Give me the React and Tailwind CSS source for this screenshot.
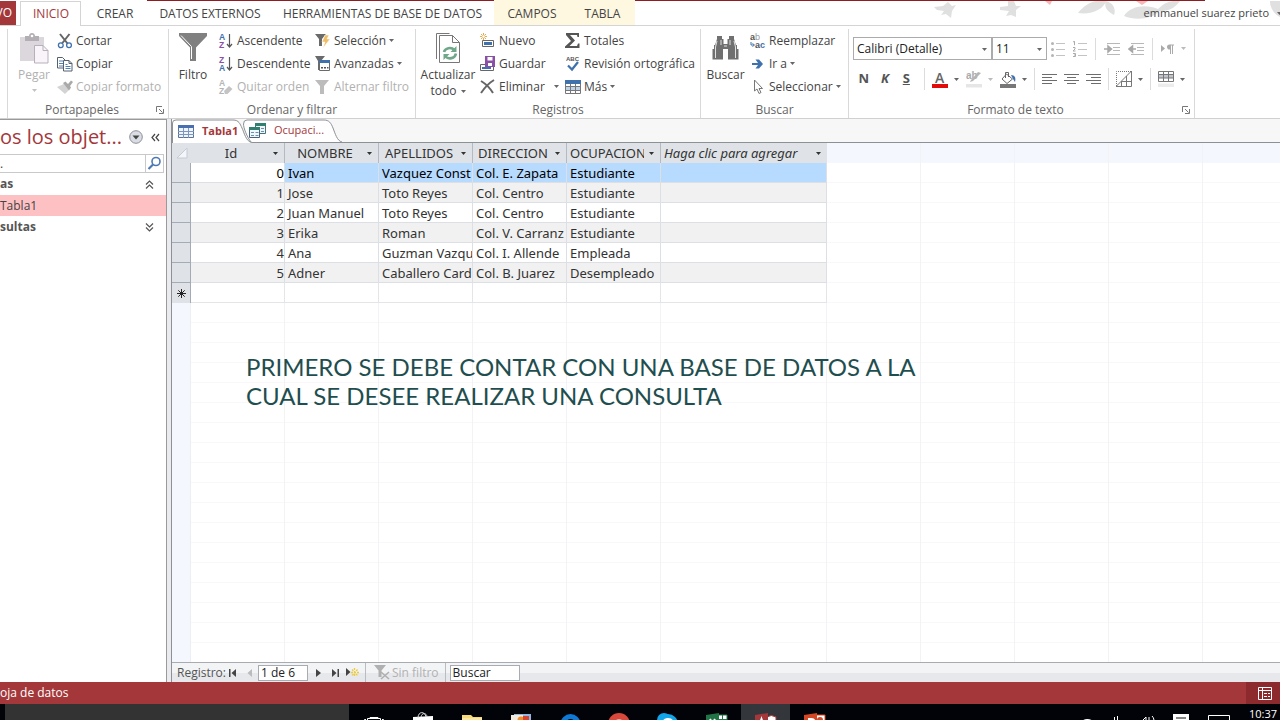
import React, { useState } from "react";
import clsx from "clsx";

const columns = [
  { name: "Id", width: 94 },
  { name: "NOMBRE", width: 94 },
  { name: "APELLIDOS", width: 94 },
  { name: "DIRECCION", width: 94 },
  { name: "OCUPACION", width: 94 },
  { name: "Haga clic para agregar", width: 166 },
];

const rows = [
  [0, "Ivan", "Vazquez Const", "Col. E. Zapata", "Estudiante"],
  [1, "Jose", "Toto Reyes", "Col. Centro", "Estudiante"],
  [2, "Juan Manuel", "Toto Reyes", "Col. Centro", "Estudiante"],
  [3, "Erika", "Roman", "Col. V. Carranz", "Estudiante"],
  [4, "Ana", "Guzman Vazqu", "Col. I. Allende", "Empleada"],
  [5, "Adner", "Caballero Card", "Col. B. Juarez", "Desempleado"],
];

/* ---------- icons ---------- */

const Svg = ({ w = 16, h = 16, className, children }) => (
  <svg width={w} height={h} viewBox={`0 0 ${w} ${h}`} fill="none" className={clsx("shrink-0", className)} aria-hidden="true">
    {children}
  </svg>
);

const Arrow = ({ color = "#666", className }) => (
  <Svg w={5} h={3} className={className}>
    <path d="M0 0h5L2.5 3z" fill={color} />
  </Svg>
);

const PasteIcon = () => (
  <Svg w={29} h={31}>
    <path d="M0 4h24v24H0z" fill="#dcd7dc" />
    <path d="M5 3h4c0-4 6-4 6 0h4v5H5z" fill="#b3aeb3" />
    <circle cx="12" cy="3" r="1.3" fill="#fff" />
    <path d="M14.500 12.500h8.500l5 5v12.500h-13.500z" fill="#f8f4fa" stroke="#b7b0ba" />
    <path d="M23 12.500v5h5" stroke="#b7b0ba" />
  </Svg>
);

const CutIcon = () => (
  <Svg>
    <path d="M3 1l7.500 9.500M12.500 1L5 10.500" stroke="#666" strokeWidth="2" />
    <circle cx="3.800" cy="12.300" r="2.400" stroke="#3f72ad" strokeWidth="1.300" />
    <circle cx="12" cy="12.300" r="2.400" stroke="#3f72ad" strokeWidth="1.300" />
  </Svg>
);

const CopyIcon = () => (
  <Svg>
    <path d="M.5 1.500h5l2.500 2.500v8H.5z" fill="#fff" stroke="#55606e" />
    <path d="M2 5h4M2 7.500h4M2 10h4" stroke="#4f7fb8" />
    <path d="M6.500 4.500h5.500l3 3v7.500H6.500z" fill="#fff" stroke="#55606e" />
    <path d="M12 4.500v3h3" stroke="#55606e" />
    <path d="M8.500 8.500h2M8.500 10.500h5M8.500 12.500h5" stroke="#4f7fb8" />
  </Svg>
);

const BrushIcon = () => (
  <Svg>
    <path d="M0 8l7-3 5 6-4 4z" fill="#d3d3d3" />
    <path d="M6 4l2.500-1.500L11 5l3-3.500L16 3l-3 4 1 1.500-2 3z" fill="#a9a9a9" />
  </Svg>
);

const FunnelBig = () => (
  <Svg w={28} h={28}>
    <path d="M0 0h28v3L17 14.500V28h-6V14.500L0 3z" fill="#808080" />
    <path d="M2 2.500l10.500 11V26" stroke="#fff" />
  </Svg>
);

const SortIcon = ({ top, bottom, topColor, bottomColor }) => (
  <Svg>
    <text x="1" y="7" fontSize="8.500" fontFamily="Liberation Sans" fontWeight="bold" fill={topColor}>{top}</text>
    <text x="1" y="15" fontSize="8.500" fontFamily="Liberation Sans" fontWeight="bold" fill={bottomColor}>{bottom}</text>
    <path d="M11.500 1v13M9 11l2.500 3 2.500-3" stroke="#555" strokeWidth="1.200" />
  </Svg>
);

const ClearSortIcon = () => (
  <Svg>
    <text x="1" y="7" fontSize="8.500" fontFamily="Liberation Sans" fontWeight="bold" fill="#b5b5b5">A</text>
    <text x="1" y="15" fontSize="8.500" fontFamily="Liberation Sans" fontWeight="bold" fill="#b5b5b5">Z</text>
    <path d="M6 12l5-5 3.500 3-5 5H7z" fill="#c4c4c4" />
  </Svg>
);

const SelectionIcon = () => (
  <Svg>
    <path d="M0 1h11L7 6v7H4V6z" fill="#6a6a6a" />
    <path d="M10 2h4l-2 4h3l-7 9 2-6H7z" fill="#eebd66" stroke="#fff" strokeWidth=".5" />
  </Svg>
);

const AdvancedIcon = () => (
  <Svg>
    <path d="M0 0h10L6 5v9H3V5z" fill="#6a6a6a" />
    <path d="M4.500 4.500h10v10h-10z" fill="#fff" stroke="#6a6a6a" />
    <path d="M4 4h11v3H4z" fill="#3f72ad" />
    <path d="M6 11h2v1.500H6zM9 11h2v1.500H9zM12 11h1.500v1.500H12z" fill="#555" />
  </Svg>
);

const ToggleFilterIcon = () => (
  <Svg>
    <path d="M0 1h14L9 7v8H5V7z" fill="#bcbcbc" />
  </Svg>
);

const RefreshIcon = () => (
  <Svg w={25} h={31}>
    <path d="M.5 26V.5h13" stroke="#777" />
    <path d="M3.500 2.500h13l7 7v20h-20z" fill="#fff" stroke="#777" />
    <path d="M16.500 2.500v7h7" stroke="#777" />
    <path d="M8 19c1-4 7-5.500 10.500-2M20 20.500c-1 5-7.500 6.500-11 2.500" stroke="#6fa889" strokeWidth="2.600" />
    <path d="M20.500 13v6h-6zM7.500 27v-6h6z" fill="#6fa889" />
  </Svg>
);

const NewRecordIcon = () => (
  <Svg>
    <path d="M3.500 0v7M0 3.500h7M1 1l5 5M6 1L1 6" stroke="#e5ab50" />
    <circle cx="3.500" cy="3.500" r="1.300" fill="#fff" />
    <path d="M2.500 7.500h11v6h-11z" fill="#fff" stroke="#666" />
    <path d="M4 9h8v3H4z" fill="#3f72ad" />
  </Svg>
);

const SaveIcon = () => (
  <Svg>
    <path d="M.5 8.500h13v6H.5z" fill="#fff" stroke="#666" />
    <path d="M2 11h9v2H2z" fill="#3f72ad" />
    <path d="M5 0h10v11H5z" fill="#8a50a5" />
    <path d="M7.500 1h5v3.500h-5zM8 7h4v3H8z" fill="#fff" />
  </Svg>
);

const DeleteIcon = () => (
  <Svg>
    <path d="M1 2c5 3 9 7 12 12M14 1C9 4 5 8 1 14" stroke="#666" strokeWidth="2" />
  </Svg>
);

const SigmaIcon = () => (
  <Svg>
    <path d="M1 0h13v4h-1.500L12 2H5l5 5.500L4.500 13H12l1-2.500h1.500V15H0v-1.500L6 8 1 2z" fill="#555" />
  </Svg>
);

const SpellIcon = () => (
  <Svg>
    <text x="1" y="5" fontSize="6" fontFamily="Liberation Sans" fontWeight="bold" fill="#555">ABC</text>
    <path d="M3 9.500l4 4L13 6" stroke="#3f72ad" strokeWidth="2.200" />
  </Svg>
);

const MoreIcon = () => (
  <Svg>
    <path d="M.5 1.500h15v13H.5z" fill="#fff" stroke="#777" />
    <path d="M0 1h16v4H0z" fill="#3f72ad" />
    <path d="M1 8h14v3H1z" fill="#bed3ea" />
    <path d="M0 7.500h16M0 11.500h16M5.500 5v10M10.500 5v10" stroke="#777" />
  </Svg>
);

const BinocularsIcon = () => (
  <Svg w={27} h={27}>
    <path d="M5 3h5v3h1.500v5h4V6H17V3h5v3l2 6h1v4h1.500v10.500H16V16h-5v10.500H.500V16H2v-4h1l2-6z" fill="#707070" />
    <path d="M5 8l-1.500 6v11M9 7v5M22 8l1.500 6v11M18 7v5M12 13h3" stroke="#fff" strokeWidth=".8" />
  </Svg>
);

const ReplaceIcon = () => (
  <Svg className="overflow-visible">
    <text x="0" y="7" fontSize="9" fontFamily="Liberation Sans" fontWeight="bold" fill="#555">a<tspan fontWeight="normal" fill="#999">b</tspan></text>
    <text x="5" y="15" fontSize="9" fontFamily="Liberation Sans" fontWeight="bold" fill="#555">a<tspan fill="#3f72ad">c</tspan></text>
    <path d="M1 9v3h2.500M2.500 10.500l2 1.500-2 1.500" stroke="#3f72ad" />
  </Svg>
);

const GotoIcon = () => (
  <Svg>
    <path d="M2 7h6L5.500 3.500H9L13 8l-4 4.500H5.500L8 9H2z" fill="#3f72ad" />
  </Svg>
);

const PointerIcon = () => (
  <Svg>
    <path d="M4.500 1v11l2.500-2 2 4.500 2-1-2-4h3.500z" fill="#fff" stroke="#777" />
  </Svg>
);

const BulletsIcon = () => (
  <Svg w={14} h={16}>
    <path d="M5 2.500h9M5 8.500h9M5 14.500h9" stroke="#c3c3c3" />
    <circle cx="1.500" cy="2.500" r="1.500" fill="#b5b5b5" />
    <circle cx="1.500" cy="8.500" r="1.500" fill="#b5b5b5" />
    <circle cx="1.500" cy="14.500" r="1.500" fill="#b5b5b5" />
  </Svg>
);

const NumbersIcon = () => (
  <Svg w={14} h={16}>
    <path d="M5 2.500h9M5 8.500h9M5 14.500h9" stroke="#c3c3c3" />
    <path d="M0 1l1.500-.8v4M0 6.500h2v1.500L0 10h2.500M0 12.500h2.500v3H0M1 14h1.500" stroke="#aaa" />
  </Svg>
);

const IndentIcon = ({ out }) => (
  <Svg w={16} h={12}>
    <path d="M3 .5h13M9 4.500h7M9 7.500h7M3 11.500h13" stroke="#b8b8b8" />
    {out ? (
      <path d="M2 6h6M4.500 3L1 6l3.500 3z" stroke="#a8a8a8" strokeWidth="1.500" fill="#a8a8a8" />
    ) : (
      <path d="M0 6h5M4 3l3.500 3L4 9z" stroke="#a8a8a8" strokeWidth="1.500" fill="#a8a8a8" />
    )}
  </Svg>
);

const DirectionIcon = () => (
  <Svg w={14} h={10}>
    <path d="M0 1l4 3.500L0 8z" fill="#aaa" />
    <path d="M6 3a2.500 2.500 0 012.500-2.500H13V1.500h-1V10h-1V1.500h-1V10H9V5.500A2.500 2.500 0 016 3z" fill="#aaa" />
  </Svg>
);

const FontColorIcon = () => (
  <Svg w={16} h={17}>
    <text x="3" y="12" fontSize="14" fontFamily="Open Sans" fontWeight="600" fill="#666">A</text>
    <path d="M0 13h16v4H0z" fill="#e00b0b" />
  </Svg>
);

const HighlightIcon = () => (
  <Svg w={16} h={17}>
    <text x="0" y="8" fontSize="10" fontFamily="Liberation Sans" fontWeight="bold" fill="#aaa">ab</text>
    <path d="M15 2l-8 8-3 1 1-2 7-8z" fill="#b5b5b5" />
    <path d="M0 13h16v3.500H0z" fill="#e6e6e6" />
  </Svg>
);

const FillIcon = () => (
  <Svg w={16} h={17}>
    <path d="M6.500 3l6 5-5.500 4.500-5-4.500z" fill="#fff" stroke="#666" />
    <path d="M5.500 7V1.500h3V6" stroke="#666" />
    <path d="M11 4c4 0 5 3 4 7l-2-3z" fill="#3f72ad" />
    <path d="M0 13h16v4H0z" fill="#777" />
  </Svg>
);

const AlignIcon = ({ d }) => (
  <Svg w={15} h={12}>
    <path d={d} stroke="#6d6d6d" />
  </Svg>
);

const GridlinesIcon = () => (
  <Svg w={16} h={16}>
    <path d="M.5 15V.5H15" stroke="#777" strokeDasharray="1 1" />
    <path d="M0 15.500L15.500 0v15.500zM10.500 5v10M5.500 10.500h10M5.500 10v5" stroke="#777" />
  </Svg>
);

const AltRowIcon = () => (
  <Svg w={16} h={16}>
    <path d="M.5.5h15v10H.5z" fill="#fff" stroke="#777" />
    <path d="M1 4h14v3H1z" fill="#bfc6ce" />
    <path d="M0 3.500h16M0 7h16M5.500 0v10M10.500 0v10" stroke="#777" />
    <path d="M0 12.500h16V16H0z" fill="#ececec" />
  </Svg>
);

const Launcher = () => (
  <Svg w={8} h={8}>
    <path d="M.5 6V.5H6M3 3l3.500 3.500M7.500 3v4.500H3" stroke="#777" />
  </Svg>
);

const Chevrons = ({ down }) => (
  <Svg w={9} h={9} className={down ? "rotate-180" : undefined}>
    <path d="M1 4.500l3.500-3.500 3.500 3.500M1 8.500L4.500 5 8 8.500" stroke="#555" strokeWidth="1.200" />
  </Svg>
);

const TableIcon = () => (
  <Svg w={16} h={13}>
    <path d="M.5.5h15v12H.5z" fill="#eef4fb" stroke="#5b7196" />
    <path d="M0 0h16v3H0z" fill="#4a6fae" />
    <path d="M0 6.500h16M0 9.500h16M5.500 3v10M10.500 3v10" stroke="#7e96bd" />
  </Svg>
);

const QueryIcon = () => (
  <Svg w={17} h={16}>
    <path d="M6.500.5h10v10h-10z" fill="#eef6f4" stroke="#47707c" />
    <path d="M6 0h11v3H6z" fill="#2f8071" />
    <path d="M.5 4.500h10v10H.5z" fill="#f2f7fb" stroke="#47607c" />
    <path d="M0 4h11v3H0z" fill="#2f8071" />
    <path d="M2 9.500h3M6.500 9.500h3M2 12.500h3M6.500 12.500h3M12 5.500h3M12 8.500h3" stroke="#6a8fb5" />
  </Svg>
);

const Birds = () => (
  <svg width="360" height="20" viewBox="0 0 360 20" className="absolute right-0 top-px" aria-hidden="true">
    <g fill="#e0e0e0">
      <path d="M14 6l9-1 5-4 4 4 4-1-4 6-1 7-5-4-5 1 3-4-7-1z" />
      <path d="M80 6l8-1V0h6l2 5 5 0-5 4v7l-5-2-5 1 3-5-9-1z" />
      <path d="M158 12c8-10 18-14 28-12-2 8-14 14-28 12zM186 0c8 2 10 9 8 14-8-4-10-9-8-14z" />
      <path d="M204 15c6-10 22-12 34-7 6-6 12-9 22-8-6 8-12 10-20 10-8 8-24 10-36 5z" />
      <path d="M350 0h10v16c-6-3-10-9-10-16z" />
    </g>
    <path d="M125 0h7l-2 4zM216 0h12l-6 4z" fill="#f4b9bb" />
  </svg>
);

/* ---------- ribbon pieces ---------- */

function SmallButton({ icon, label, arrow, disabled, arrowGap }) {
  return (
    <button
      disabled={disabled}
      className={clsx("flex h-[23px] items-center gap-[3px] whitespace-nowrap text-xs", disabled ? "text-[#b1b1b1]" : "text-[#444]")}
    >
      {icon}
      {label}
      {arrow && <Arrow className={arrowGap ? "ml-1.5" : undefined} />}
    </button>
  );
}

function BigButton({ icon, lines, arrow, disabled, className }) {
  return (
    <button
      disabled={disabled}
      className={clsx("flex shrink-0 flex-col items-center pt-1 text-xs leading-4", disabled ? "text-[#b1b1b1]" : "text-[#444]", className)}
    >
      <span className="flex h-[34px] items-start">{icon}</span>
      {lines.map((line, i) => (
        <span key={line} className="flex items-center gap-1 whitespace-nowrap">
          {line}
          {arrow && i > 0 && <Arrow />}
        </span>
      ))}
      {arrow && lines.length === 1 && <Arrow color="#c2c2c2" className="mt-1.5" />}
    </button>
  );
}

function Group({ label, launcher, className, children }) {
  return (
    <section className={clsx("flex shrink-0 flex-col border-r border-[#d9d9d9]", className)}>
      <div className="flex h-[73px]">{children}</div>
      <div className="flex h-4 items-center text-xs text-[#666]">
        <span className="flex-1 text-center">{label}</span>
        {launcher && (
          <button aria-label={`${label}: opciones`} className="mr-1">
            <Launcher />
          </button>
        )}
      </div>
    </section>
  );
}

const Divider = () => <span className="h-[22px] w-px shrink-0 bg-[#dcdcdc]" />;

function IconButton({ name, arrow, arrowColor, children }) {
  return (
    <button aria-label={name} className="flex shrink-0 items-center gap-1.5">
      {children}
      {arrow && <Arrow color={arrowColor} />}
    </button>
  );
}

function Combo({ label, value, className }) {
  return (
    <label className={clsx("relative block h-[23px] border border-[#ababab] bg-white", className)}>
      <select aria-label={label} className="block h-full w-full appearance-none bg-transparent pl-[3px] text-xs text-[#222] outline-none">
        <option>{value}</option>
      </select>
      <Arrow className="pointer-events-none absolute right-1 top-2.5" />
    </label>
  );
}

function Ribbon() {
  return (
    <div className="flex shrink-0 overflow-hidden border-b border-[#d0d0d0] pt-[3px]">
      <div className="w-2 shrink-0 border-r border-[#d9d9d9]" />
      <Group label="Portapapeles" launcher className="w-[161px]">
        <BigButton className="w-12 pl-1" icon={<PasteIcon />} lines={["Pegar"]} arrow disabled />
        <div className="ml-px">
          <SmallButton icon={<CutIcon />} label="Cortar" />
          <SmallButton icon={<CopyIcon />} label="Copiar" />
          <SmallButton icon={<BrushIcon />} label="Copiar formato" disabled />
        </div>
      </Group>
      <Group label="Ordenar y filtrar" className="w-[247px]">
        <BigButton className="w-12" icon={<FunnelBig />} lines={["Filtro"]} />
        <div className="ml-px w-[97px]">
          <SmallButton icon={<SortIcon top="A" bottom="Z" topColor="#3f72ad" bottomColor="#8a50a5" />} label="Ascendente" />
          <SmallButton icon={<SortIcon top="Z" bottom="A" topColor="#8a50a5" bottomColor="#3f72ad" />} label="Descendente" />
          <SmallButton icon={<ClearSortIcon />} label="Quitar orden" disabled />
        </div>
        <div>
          <SmallButton icon={<SelectionIcon />} label="Selección" arrow />
          <SmallButton icon={<AdvancedIcon />} label="Avanzadas" arrow />
          <SmallButton icon={<ToggleFilterIcon />} label="Alternar filtro" disabled />
        </div>
      </Group>
      <Group label="Registros" className="w-[285px]">
        <BigButton className="w-16" icon={<RefreshIcon />} lines={["Actualizar", "todo"]} arrow />
        <div className="w-[85px]">
          <SmallButton icon={<NewRecordIcon />} label="Nuevo" />
          <SmallButton icon={<SaveIcon />} label="Guardar" />
          <SmallButton icon={<DeleteIcon />} label="Eliminar" arrow arrowGap />
        </div>
        <div>
          <SmallButton icon={<SigmaIcon />} label="Totales" />
          <SmallButton icon={<SpellIcon />} label="Revisión ortográfica" />
          <SmallButton icon={<MoreIcon />} label="Más" arrow />
        </div>
      </Group>
      <Group label="Buscar" className="w-[148px]">
        <BigButton className="w-[49px]" icon={<BinocularsIcon />} lines={["Buscar"]} />
        <div>
          <SmallButton icon={<ReplaceIcon />} label="Reemplazar" />
          <SmallButton icon={<GotoIcon />} label="Ir a" arrow />
          <SmallButton icon={<PointerIcon />} label="Seleccionar" arrow />
        </div>
      </Group>
      <Group label="Formato de texto" launcher className="w-[346px]">
        <div className="flex flex-col gap-2 pl-1 pt-2">
          <div className="flex items-center gap-2">
            <div className="flex">
              <Combo label="Fuente" value="Calibri (Detalle)" className="w-[139px]" />
              <Combo label="Tamaño de fuente" value="11" className="w-[55px]" />
            </div>
            <div className="-ml-1 flex items-center gap-2">
              <IconButton name="Viñetas"><BulletsIcon /></IconButton>
              <IconButton name="Numeración"><NumbersIcon /></IconButton>
              <Divider />
              <IconButton name="Aumentar sangría"><IndentIcon /></IconButton>
              <IconButton name="Disminuir sangría"><IndentIcon out /></IconButton>
              <Divider />
              <IconButton name="Dirección del texto" arrow arrowColor="#bbb"><DirectionIcon /></IconButton>
            </div>
          </div>
          <div className="flex h-[22px] items-center gap-[7px]">
            <div className="flex w-16 text-[13px] font-bold text-[#555]">
              <button aria-label="Negrita" className="flex-1">N</button>
              <button aria-label="Cursiva" className="flex-1 italic">K</button>
              <button aria-label="Subrayado" className="flex-1 underline">S</button>
            </div>
            <Divider />
            <IconButton name="Color de fuente" arrow><FontColorIcon /></IconButton>
            <IconButton name="Color de resaltado" arrow arrowColor="#bbb"><HighlightIcon /></IconButton>
            <IconButton name="Color de fondo" arrow><FillIcon /></IconButton>
            <Divider />
            <IconButton name="Alinear a la izquierda"><AlignIcon d="M0 1.500h15M0 4.500h10M0 7.500h15M0 10.500h10" /></IconButton>
            <IconButton name="Centrar"><AlignIcon d="M0 1.500h15M3 4.500h9M0 7.500h15M3 10.500h9" /></IconButton>
            <IconButton name="Alinear a la derecha"><AlignIcon d="M0 1.500h15M5 4.500h10M0 7.500h15M5 10.500h10" /></IconButton>
            <Divider />
            <IconButton name="Líneas de división" arrow><GridlinesIcon /></IconButton>
            <Divider />
            <IconButton name="Color de fila alternativo" arrow><AltRowIcon /></IconButton>
          </div>
        </div>
      </Group>
    </div>
  );
}

function RibbonTabs() {
  return (
    <header className="relative flex h-[26px] shrink-0 items-stretch whitespace-nowrap border-b border-[#d4d4d4] text-xs text-[#444]">
      <div className="absolute left-[147px] top-0 h-px w-[1058px] bg-[#8e1c20]" />
      <Birds />
      <button className="relative mt-px flex w-4 justify-end overflow-hidden bg-[#a4373a] pr-1 pt-1 text-white">VO</button>
      <button className="relative -mb-px ml-1 mt-px w-[61px] border border-b-0 border-[#d4d4d4] bg-white px-3 text-left text-[#a4373a]">INICIO</button>
      <button className="w-[68px] pt-0.5">CREAR</button>
      <button className="w-[122px] pt-0.5">DATOS EXTERNOS</button>
      <button className="w-[223px] pt-0.5">HERRAMIENTAS DE BASE DE DATOS</button>
      <button className="relative w-[76px] bg-[#fef8e0] pt-0.5">CAMPOS</button>
      <button className="relative w-[65px] bg-[#fef8e0] pt-0.5">TABLA</button>
      <button className="relative ml-auto flex items-center gap-2 pt-0.5 text-[11px]">
        emmanuel suarez prieto
        <Arrow className="-mr-0.5" />
      </button>
    </header>
  );
}

/* ---------- panels ---------- */

function NavPane() {
  return (
    <aside className="w-[167px] shrink-0 overflow-hidden whitespace-nowrap border-r border-t border-[#9a9a9a] bg-white text-[#555]">
      <div className="flex h-[34px] items-center">
        <h2 className="flex-1 text-xl text-[#a4373a]">os los objet...</h2>
        <button aria-label="Menú de objetos" className="mr-2">
          <Svg w={14} h={14}>
            <circle cx="7" cy="7" r="6.300" fill="#dadde3" stroke="#8c8f96" />
            <path d="M3.500 5.500h7L7 9.500z" fill="#444" />
          </Svg>
        </button>
        <button aria-label="Contraer panel" className="mr-1.5">
          <Svg w={9} h={9}>
            <path d="M4 1L1 4.500 4 8M8 1L5 4.500 8 8" stroke="#444" strokeWidth="1.200" />
          </Svg>
        </button>
      </div>
      <div className="mr-0.5 flex h-[19px] border border-l-0 border-[#c9c9c9]">
        <input aria-label="Buscar objetos" defaultValue="." className="min-w-0 flex-1 text-xs text-[#444] outline-none" />
        <button aria-label="Buscar" className="border-l border-[#c9c9c9] px-px">
          <Svg w={15} h={15}>
            <circle cx="9" cy="5.500" r="4" stroke="#4c79b5" strokeWidth="1.600" />
            <path d="M6 8.500l-4.500 4.500" stroke="#4c79b5" strokeWidth="2.200" />
          </Svg>
        </button>
      </div>
      <button className="flex h-[22px] w-full items-center justify-between pr-3 text-xs font-bold">
        as <Chevrons />
      </button>
      <a href="#tabla1" className="flex h-[21px] items-center bg-[#fec1c3] text-xs text-[#444]">Tabla1</a>
      <button className="flex h-[22px] w-full items-center justify-between pr-3 text-xs font-bold">
        sultas <Chevrons down />
      </button>
    </aside>
  );
}

function DocumentTabs() {
  return (
    <div className="flex h-6 shrink-0 border-b border-[#8d9095] bg-[#f7f7f7] text-[11px] text-[#a4373a]">
      <button className="relative z-10 -mb-px flex w-20 items-center gap-2 pl-1.5 font-bold">
        <Svg w={80} h={24} className="absolute left-0 top-0">
          <path d="M.5 24V4Q.500 1 4 1h57c6 0 7 4 9 8s4 14 10 14.500V24z" fill="#fff" />
          <path d="M.5 24V4Q.500 1 4 1h57c6 0 7 4 9 8s4 14 10 14.500" stroke="#8d9095" />
        </Svg>
        <span className="relative"><TableIcon /></span>
        <span className="relative">Tabla1</span>
      </button>
      <button className="relative -ml-[9px] flex w-[100px] items-center gap-2 pl-1.5">
        <Svg w={100} h={23} className="absolute left-0 top-0">
          <path d="M8 23C4 18 .500 9 .500 5Q.500 1 4 1h77c5 0 7 3 9 8s4 13 9 14" fill="#fff" stroke="#8d9095" />
        </Svg>
        <span className="relative"><QueryIcon /></span>
        <span className="relative">Ocupaci...</span>
      </button>
    </div>
  );
}

// Faint lines that continue the datasheet below and to the right of the records
function EmptyGrid() {
  const line = "shrink-0 border-r border-[#f3f3f5]";
  return (
    <div className="flex overflow-hidden bg-white bg-[repeating-linear-gradient(to_bottom,transparent_0_19px,#f8f8fa_19px_20px)] [grid-area:1/1]">
      <div className="w-[19px] shrink-0 border-r border-[#eceef6] bg-[#f5f7ff]" />
      {columns.map((c) => (
        <div key={c.name} className={line} style={{ width: c.width }} />
      ))}
      {[0, 1, 2, 3].map((n) => (
        <div key={n} className={clsx(line, "w-[94px]")}>
          <div className="h-5 bg-[#f5f7ff]" />
        </div>
      ))}
      <div className="flex-1">
        <div className="h-5 bg-[#f5f7ff]" />
      </div>
    </div>
  );
}

function Datasheet() {
  const [selected, setSelected] = useState(0);

  return (
    <div className="grid min-h-0 flex-1 grid-cols-1 grid-rows-1 overflow-hidden">
      <EmptyGrid />
      <div className="relative overflow-hidden [grid-area:1/1]">
        <table className="w-[655px] table-fixed border-separate border-spacing-0 font-['Noto_Sans',sans-serif] text-[13px] leading-[18px] text-[#333]">
          <colgroup>
            <col className="w-[19px]" />
            {columns.map((c) => (
              <col key={c.name} style={{ width: c.width }} />
            ))}
          </colgroup>
          <thead>
            <tr className="bg-[#dfe3e8]">
              <th className="h-5 p-0">
                <Svg w={19} h={16}>
                  <path d="M15 3v10H5z" fill="#f4f6f9" stroke="#c5ccd6" />
                </Svg>
              </th>
              {columns.map((c, i) => (
                <th key={c.name} className={clsx("h-5 p-0 font-normal", i < 5 && "border-r border-[#b4bac3]")}>
                  <button className={clsx("flex w-full items-center justify-between pr-1.5", i === 5 && "italic")}>
                    <span className={clsx("mr-[5px] flex-1 overflow-hidden whitespace-nowrap pl-[3px]", i > 3 ? "text-left" : "text-center")}>{c.name}</span>
                    <Arrow color="#333" />
                  </button>
                </th>
              ))}
            </tr>
          </thead>
          <tbody>
            {rows.map((row, r) => (
              <tr
                key={row[0]}
                onClick={() => setSelected(r)}
                className={clsx(r === selected ? "text-black" : r % 2 ? "bg-[#f1f1f1]" : "bg-white")}
              >
                <td className="h-5 border-b border-r border-[#a3abb7] bg-[#dfe3e8] p-0" />
                {[...row, ""].map((cell, c) => (
                  <td
                    key={c}
                    className={clsx(
                      "h-5 overflow-hidden whitespace-nowrap border-b border-r border-[#dcdfe3] p-0 pt-px",
                      c === 0 ? "text-right" : "pl-[3px]",
                      r === selected && (c === 0 ? "bg-white" : "bg-[#b7daff]")
                    )}
                  >
                    {cell}
                  </td>
                ))}
              </tr>
            ))}
            <tr className="bg-white">
              <td className="h-5 border-r border-[#a3abb7] bg-[#dfe3e8] p-0">
                <Svg w={18} h={19}>
                  <path d="M9.500 5v9M5 9.500h9M6.300 6.300l6.400 6.400M12.700 6.300l-6.400 6.400" stroke="#222" />
                </Svg>
              </td>
              {columns.map((c) => (
                <td key={c.name} className="h-5 border-b border-r border-[#e3e5e8] p-0" />
              ))}
            </tr>
          </tbody>
        </table>
        <p className="ml-[74px] mt-[49px] max-w-[700px] font-['Lato'] text-2xl leading-[29px] text-[#1f4e4f]">
          PRIMERO SE DEBE CONTAR CON UNA BASE DE DATOS A LA CUAL SE DESEE REALIZAR UNA CONSULTA
        </p>
      </div>
    </div>
  );
}

function RecordBar() {
  return (
    <div className="flex h-5 shrink-0 items-center whitespace-nowrap border-t border-[#a8abb0] bg-linear-to-b from-[#f3f4f6] from-50% to-[#e6e8eb] to-50% pl-[5px] text-xs text-[#555]">
      <label htmlFor="record" className="w-[52px]">Registro:</label>
      <button aria-label="Primer registro" className="mr-2.5">
        <Svg w={8} h={8}><path d="M0 0h1.500v8H0zM7 0v8L2.500 4z" fill="#444" /></Svg>
      </button>
      <button aria-label="Registro anterior" className="mr-1">
        <Svg w={7} h={8}><path d="M5 0v8L.500 4z" fill="#bbb" /></Svg>
      </button>
      <input id="record" defaultValue="1 de 6" className="h-4 w-[50px] border border-[#a8abb0] bg-white pl-0.5 text-xs text-[#222] outline-none" />
      <button aria-label="Registro siguiente" className="ml-2">
        <Svg w={6} h={8}><path d="M0 0v8l5-4z" fill="#444" /></Svg>
      </button>
      <button aria-label="Último registro" className="ml-2.5">
        <Svg w={8} h={8}><path d="M0 0v8l4.500-4zM5.500 0H7v8H5.500z" fill="#444" /></Svg>
      </button>
      <button aria-label="Nuevo registro" className="ml-1.5">
        <Svg w={13} h={9}>
          <path d="M0 0v8l4.500-4z" fill="#444" />
          <path d="M8.500 0v9M5 4.500h8M6 1.500l5.500 6M11.500 1.500L6 7.500" stroke="#eecb3c" strokeWidth="1.300" strokeDasharray="2 1" />
        </Svg>
      </button>
      <span className="ml-1.5 h-full w-px bg-[#b9bcc1]" />
      <button disabled className="ml-2 flex items-center gap-0.5 text-[#b1b1b1]">
        <Svg w={16} h={15}>
          <path d="M0 0h12L7.500 5.500V12h-3V5.500z" fill="#b0b0b0" />
          <path d="M7 7l8 7M15 7l-8 7" stroke="#b0b0b0" strokeWidth="1.600" />
        </Svg>
        Sin filtro
      </button>
      <span className="ml-1.5 h-full w-px bg-[#b9bcc1]" />
      <input aria-label="Buscar en la tabla" defaultValue="Buscar" className="ml-1 h-4 w-[70px] border border-[#a8abb0] bg-white pl-0.5 text-xs text-[#222] outline-none" />
    </div>
  );
}

function StatusBar() {
  return (
    <footer className="flex h-[22px] shrink-0 items-center justify-between bg-[#a4373a] text-xs text-white">
      oja de datos
      <button aria-label="Vista Hoja de datos" className="flex h-full w-[34px] items-center justify-center bg-[#8c2a2d] pl-1">
        <Svg w={14} h={13}>
          <path d="M.5.5h13v12H.5zM0 3.500h14M4.500 0v13M6 6.500h3M10 6.500h2M6 9.500h3M10 9.500h2" stroke="#fff" />
        </Svg>
      </button>
    </footer>
  );
}

function TaskIcon({ name, active, children }) {
  return (
    <button aria-label={name} className={clsx("flex w-[49px] shrink-0 justify-center pt-2", active && "bg-[#33363b]")}>
      <Svg w={24} h={24}>{children}</Svg>
    </button>
  );
}

function Taskbar() {
  return (
    <nav className="flex h-4 shrink-0 items-start overflow-hidden bg-[#020308] pl-[5px] text-white">
      <input
        aria-label="Buscar en la web y en Windows"
        placeholder="Buscar en la web y en Windows"
        className="h-[42px] w-[344px] shrink-0 bg-[#333] pl-3 text-sm outline-none placeholder:text-[#a0a0a0]"
      />
      <TaskIcon name="Vista de tareas">
        <path d="M5.500 6.500h13v12h-13zM8 6.500v-1h8v1M4 7.500H2.500v10M20 7.500h1.500v10" stroke="#fff" />
      </TaskIcon>
      <TaskIcon name="Tienda">
        <path d="M2 5l20-1v16H2z" fill="#fff" />
        <path d="M7 6c0-7 7-7 8-1M10 5c1-5 6-4 6 0" stroke="#ddd" />
      </TaskIcon>
      <TaskIcon name="Explorador de archivos">
        <path d="M2 3h9l2 2h9v16H2z" fill="#f6d978" />
        <path d="M2 6h20v14H2z" fill="#fbe7a2" />
      </TaskIcon>
      <TaskIcon name="Imágenes">
        <path d="M5 2h17v18H5z" fill="#8fb8e6" />
        <path d="M2 3h12v18H2z" fill="#f2e9dc" />
        <circle cx="12" cy="8" r="3.500" fill="#ef8e2e" />
        <path d="M14 4h6v9h-6z" fill="#d9442f" />
      </TaskIcon>
      <TaskIcon name="Edge">
        <path d="M5 12a7.500 7.500 0 0115 0v2H9" stroke="#0f78d4" strokeWidth="5" />
      </TaskIcon>
      <TaskIcon name="Chrome">
        <circle cx="12" cy="12" r="11" fill="#d9483b" />
        <circle cx="12" cy="12" r="5" fill="#e8b1a6" />
      </TaskIcon>
      <TaskIcon name="Skype">
        <circle cx="8" cy="8" r="7" fill="#12a5e9" />
        <circle cx="12" cy="12" r="10" fill="#12a5e9" />
        <path d="M16 9c-2-3-8-2-8 1s8 2 8 5-6 3-8 1" stroke="#fff" strokeWidth="2.500" />
      </TaskIcon>
      <TaskIcon name="Excel">
        <path d="M13 3h9v17h-9z" fill="#fff" stroke="#217346" />
        <path d="M17.500 3v17M13 7.500h9" stroke="#217346" />
        <path d="M1 3l13-2v23L1 21z" fill="#217346" />
        <path d="M5 7l5 9M10 7l-5 9" stroke="#fff" strokeWidth="2" />
      </TaskIcon>
      <TaskIcon name="Access" active>
        <path d="M13 5q4-3 9 0v15h-9z" fill="#fff" stroke="#a4373a" />
        <path d="M1 3l13-2v23L1 21z" fill="#a4373a" />
        <path d="M4 17L7.500 7 11 17" stroke="#fff" strokeWidth="2" />
      </TaskIcon>
      <TaskIcon name="PowerPoint">
        <path d="M13 3h9v17h-9z" fill="#fff" stroke="#d24726" />
        <circle cx="17" cy="8" r="3" fill="#d24726" />
        <path d="M1 3l13-2v23L1 21z" fill="#d24726" />
        <path d="M6 17V7h2.500a3 3 0 010 6H6" stroke="#fff" strokeWidth="2" />
      </TaskIcon>
      <div className="ml-auto flex gap-[18px] pr-[3px]">
        <Svg w={16} h={20} className="mt-2"><path d="M3 11c2-4 8-4 12 0" stroke="#fff" strokeWidth="2" /></Svg>
        <Svg w={8} h={20} className="mt-2"><path d="M1.500 5v5M4.500 4v6" stroke="#fff" /></Svg>
        <Svg w={16} h={20} className="mt-2"><path d="M3 9l4-4v6M10 5v5M13 4c2 2 2 4 2 6" stroke="#fff" /></Svg>
        <Svg w={16} h={20} className="mt-2"><path d="M0 2h16v14H0z" fill="#fff" /><path d="M3 6h10" stroke="#111" /></Svg>
        <Svg w={24} h={20} className="mt-2"><path d="M1.500 3.500h21v12h-21z" stroke="#fff" /></Svg>
        <time className="text-[11px] leading-5">10:37</time>
      </div>
    </nav>
  );
}

function App() {
  return (
    <div className="flex h-screen flex-col overflow-hidden bg-white font-['Open_Sans',sans-serif]">
      <RibbonTabs />
      <Ribbon />
      <div className="flex min-h-0 flex-1 bg-[#e9ebee]">
        <NavPane />
        <main className="ml-1 flex min-w-0 flex-1 flex-col border-l border-[#8d9095]">
          <DocumentTabs />
          <Datasheet />
          <RecordBar />
        </main>
      </div>
      <StatusBar />
      <Taskbar />
    </div>
  );
}

export default App;
